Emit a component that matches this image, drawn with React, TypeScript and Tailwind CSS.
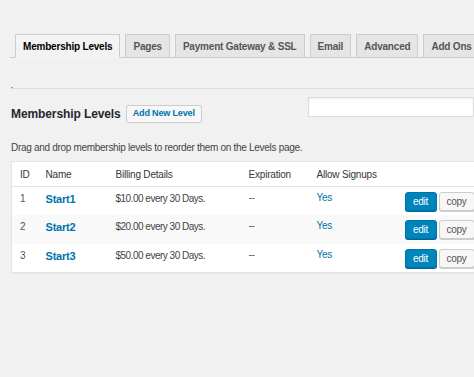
const tabs = ["Membership Levels", "Pages", "Payment Gateway & SSL", "Email", "Advanced", "Add Ons"];

const levels = [
  { id: 1, name: "Start1", billing: "$10.00 every 30 Days." },
  { id: 2, name: "Start2", billing: "$20.00 every 30 Days." },
  { id: 3, name: "Start3", billing: "$50.00 every 30 Days." },
];

export default function App() {
  return (
    <div
      className="w-[474px] h-[377px] overflow-hidden bg-[#f1f1f1] text-[#444] pl-[10px]"
      style={{ fontFamily: '"Liberation Sans", Arial, sans-serif' }}
    >
      <div className="flex items-end gap-[5px] pt-[34px] pl-[5px] border-b border-[#ccc] whitespace-nowrap">
        {tabs.map((t, i) => (
          <div
            key={t}
            className={
              i === 0
                ? "h-[24px] px-[7px] flex items-center border border-[#ccc] border-b-[#f3f3f3] -mb-px bg-[#f3f3f3] text-[10px] tracking-[-0.2px] font-bold text-black"
                : "h-[23px] px-[7px] flex items-center border border-[#ccc] border-b-0 bg-[#e5e5e5] text-[10px] tracking-[-0.2px] font-bold text-[#555]"
            }
          >
            {t}
          </div>
        ))}
      </div>

      <div className="mt-[30px] border-t border-[#ddd] relative">
        <span className="absolute left-[1px] -top-[2px] w-[2px] h-[1px] bg-[#999]" />
      </div>

      <div className="flex items-start mt-[8px]">
        <div className="flex items-center mt-[8px]">
          <h2 className="text-[12px] tracking-[-0.1px] font-bold text-[#23282d] ml-[1px]">Membership Levels</h2>
          <button className="ml-[5px] h-[18px] px-[6px] border border-[#ccc] bg-[#f7f7f7] rounded-[2px] text-[9px] tracking-[-0.15px] font-bold text-[#0073aa]">
            Add New Level
          </button>
        </div>
        <input className="ml-auto w-[166px] h-[20px] bg-white border border-[#ddd] shadow-[inset_0_1px_2px_rgba(0,0,0,0.07)]" />
      </div>

      <p className="mt-[17px] ml-[1px] text-[10px] tracking-[-0.3px] text-[#444]">
        Drag and drop membership levels to reorder them on the Levels page.
      </p>

      <table className="mt-[6px] ml-[1px] w-[480px] bg-white border border-[#e5e5e5] shadow-[0_1px_1px_rgba(0,0,0,0.04)] text-[10px] tracking-[-0.2px] border-collapse">
        <thead>
          <tr className="h-[25px] border-b border-[#e1e1e1] text-[#32373c]">
            <th className="font-normal text-left pl-[8px] w-[34px]">ID</th>
            <th className="font-normal text-left w-[70px]">Name</th>
            <th className="font-normal text-left w-[133px]">Billing Details</th>
            <th className="font-normal text-left w-[68px]">Expiration</th>
            <th className="font-normal text-left w-[88px]">Allow Signups</th>
            <th></th>
          </tr>
        </thead>
        <tbody className="text-[10px] tracking-[-0.3px]">
          {levels.map((l, i) => (
            <tr key={l.id} className={i === 1 ? "h-[29px] bg-[#f9f9f9]" : i === 0 ? "h-[28px]" : "h-[29px]"}>
              <td className="pl-[8px] align-top pt-[4px] text-[#555]">{l.id}</td>
              <td className="align-top pt-[4px] text-[11px] tracking-[-0.2px] font-bold text-[#0073aa]">{l.name}</td>
              <td className="align-top pt-[4px] tracking-[-0.5px] text-[#444]">{l.billing}</td>
              <td className="align-top pt-[3px] text-[#555]">--</td>
              <td className="align-top pt-[3px] text-[#0073aa]">Yes</td>
              <td className="align-top pt-[5px]">
                <div className="flex gap-[2px]">
                  <button className="h-[19px] w-[32px] bg-[#0085ba] border border-[#0073aa] rounded-[3px] text-white text-[10px] shadow-[0_1px_0_#006799]">
                    edit
                  </button>
                  <button className="h-[19px] w-[36px] bg-[#f7f7f7] border border-[#ccc] rounded-[3px] text-[#555] text-[10px] shadow-[0_1px_0_#ccc]">
                    copy
                  </button>
                </div>
              </td>
            </tr>
          ))}
        </tbody>
      </table>
    </div>
  );
}
